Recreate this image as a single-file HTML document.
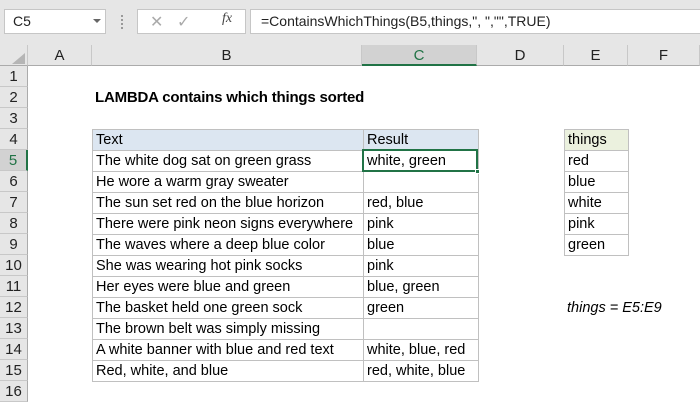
<!DOCTYPE html>
<html><head><style>
*{margin:0;padding:0;box-sizing:border-box}
body{width:700px;height:400px;overflow:hidden;background:#fff;font-family:"Liberation Sans",sans-serif;position:relative;color:#000}
.a{position:absolute}
.bar{left:0;top:0;width:700px;height:45px;background:#e6e6e6}
.box{background:#fff;border:1px solid #c6c6c6}
.ch{top:45px;height:21px;background:#e6e6e6;border-right:1px solid #c8c8c8;border-bottom:1px solid #ababab;font-size:15px;text-align:center;line-height:21px;color:#222}
.rh{left:0;width:28px;height:21px;background:#e6e6e6;border-bottom:1px solid #c8c8c8;border-right:1px solid #ababab;font-size:15px;text-align:center;line-height:21px;color:#222}
.c{height:21px;border:1px solid #c0c0c0;margin:0;font-size:14.5px;line-height:20px;padding-left:3px;white-space:nowrap;overflow:hidden}
table{border-collapse:collapse;table-layout:fixed}
</style></head><body>
<div class="a bar"></div>
<div class="a box" style="left:4px;top:9px;width:102px;height:25px;font-size:14px;line-height:23px;padding-left:8px;color:#222">C5</div>
<div class="a" style="left:93px;top:19px;width:0;height:0;border-left:4px solid transparent;border-right:4px solid transparent;border-top:4px solid #666"></div>
<div class="a" style="left:121px;top:15px;width:2px;height:14px;border-left:2px dotted #999"></div>
<div class="a box" style="left:137px;top:9px;width:109px;height:25px"></div>
<div class="a" style="left:150px;top:12px;font-size:16px;color:#aaa">✕</div>
<div class="a" style="left:177px;top:12px;font-size:16px;color:#aaa">✓</div>
<div class="a" style="left:222px;top:11px;font-size:14px;font-style:italic;font-family:'Liberation Serif',serif;color:#444">fx</div>
<div class="a box" style="left:250px;top:9px;width:460px;height:25px;font-size:14px;line-height:23px;padding-left:10px;color:#222">=ContainsWhichThings(B5,things,", ","",TRUE)</div>

<div class="a ch" style="left:0;width:28px;"></div>
<div class="a" style="left:12px;top:53px;width:0;height:0;border-left:13px solid transparent;border-bottom:11px solid #b5b5b5"></div>
<div class="a ch" style="left:28px;width:64px">A</div>
<div class="a ch" style="left:92px;width:270px">B</div>
<div class="a ch" style="left:362px;width:115px;background:#d2d2d2;color:#217346;border-bottom:2px solid #217346">C</div>
<div class="a ch" style="left:477px;width:87px">D</div>
<div class="a ch" style="left:564px;width:64px">E</div>
<div class="a ch" style="left:628px;width:72px">F</div>

<div class="a rh" style="top:66px">1</div><div class="a rh" style="top:87px">2</div><div class="a rh" style="top:108px">3</div><div class="a rh" style="top:129px">4</div>
<div class="a rh" style="top:150px;background:#d2d2d2;color:#217346;border-right:2px solid #217346">5</div>
<div class="a rh" style="top:171px">6</div><div class="a rh" style="top:192px">7</div><div class="a rh" style="top:213px">8</div><div class="a rh" style="top:234px">9</div><div class="a rh" style="top:255px">10</div><div class="a rh" style="top:276px">11</div><div class="a rh" style="top:297px">12</div><div class="a rh" style="top:318px">13</div><div class="a rh" style="top:339px">14</div><div class="a rh" style="top:360px">15</div><div class="a rh" style="top:381px">16</div>

<div class="a" style="left:95px;top:89px;font-size:15px;font-weight:bold;letter-spacing:-0.2px">LAMBDA contains which things sorted</div>

<div class="a" style="left:92px;top:129px">
<table style="width:386px">
<colgroup><col style="width:271px"><col style="width:115px"></colgroup>
<tr style="background:#dce6f1"><td class="c">Text</td><td class="c">Result</td></tr>
<tr><td class="c">The white dog sat on green grass</td><td class="c">white, green</td></tr>
<tr><td class="c">He wore a warm gray sweater</td><td class="c"></td></tr>
<tr><td class="c">The sun set red on the blue horizon</td><td class="c">red, blue</td></tr>
<tr><td class="c">There were pink neon signs everywhere</td><td class="c">pink</td></tr>
<tr><td class="c">The waves where a deep blue color</td><td class="c">blue</td></tr>
<tr><td class="c">She was wearing hot pink socks</td><td class="c">pink</td></tr>
<tr><td class="c">Her eyes were blue and green</td><td class="c">blue, green</td></tr>
<tr><td class="c">The basket held one green sock</td><td class="c">green</td></tr>
<tr><td class="c">The brown belt was simply missing</td><td class="c"></td></tr>
<tr><td class="c">A white banner with blue and red text</td><td class="c">white, blue, red</td></tr>
<tr><td class="c">Red, white, and blue</td><td class="c">red, white, blue</td></tr>
</table></div>
<div class="a" style="left:362px;top:149px;width:116px;height:23px;border:2px solid #217346"></div>
<div class="a" style="left:475px;top:169px;width:5px;height:5px;background:#217346;border:1px solid #fff"></div>

<div class="a" style="left:564px;top:129px">
<table style="width:65px">
<tr style="background:#ebf1de"><td class="c">things</td></tr>
<tr><td class="c">red</td></tr><tr><td class="c">blue</td></tr><tr><td class="c">white</td></tr><tr><td class="c">pink</td></tr><tr><td class="c">green</td></tr>
</table></div>
<div class="a" style="left:567px;top:300px;font-size:14.5px;font-style:italic">things = E5:E9</div>
</body></html>
